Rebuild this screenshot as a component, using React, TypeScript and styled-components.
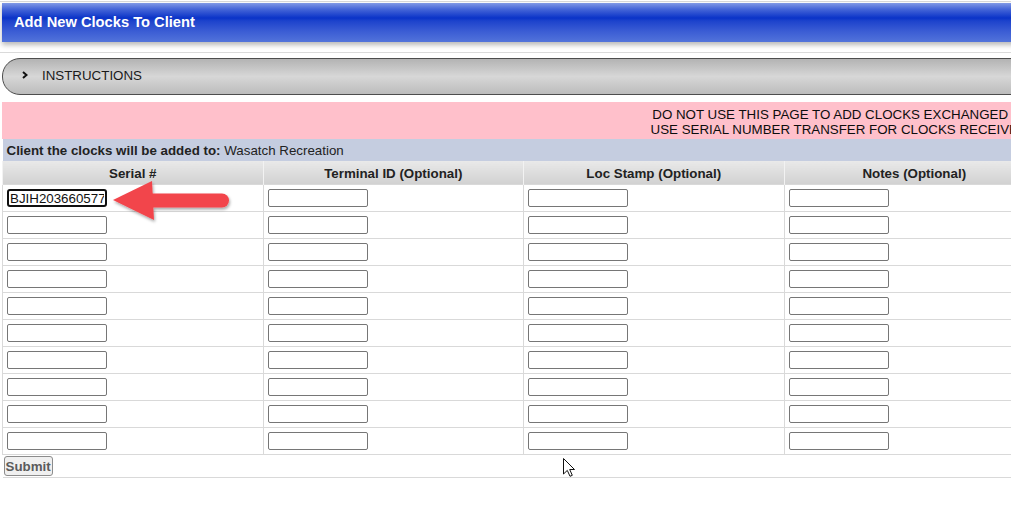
import React from 'react';
import styled, { createGlobalStyle } from 'styled-components';

const GlobalStyle = createGlobalStyle`
  html, body {
    margin: 0;
    padding: 0;
    overflow: hidden;
    background: #fff;
  }
  body {
    font-family: "Liberation Sans", Arial, sans-serif;
    font-size: 13.33px;
    color: #222;
  }
`;

const Page = styled.div`
  position: relative;
  width: 1792px;
  padding-top: 1px;
`;

const Rule = styled.div<{ $gap?: number }>`
  height: 1px;
  background: #dadada;
  margin-top: ${p => p.$gap || 0}px;
`;

const Inner = styled.div`
  padding-left: 2px;
`;

const TitleBar = styled.div`
  margin-top: 1px;
  height: 39px;
  display: flex;
  align-items: center;
  padding: 0 0 1px 12px;
  box-sizing: border-box;
  background: linear-gradient(
    to bottom,
    #8199e6 0px,
    #4767d8 6px,
    #0a33c8 15px,
    #1d43cc 18px,
    #3a5cd4 28px,
    #5273da 39px
  );
  box-shadow: 0 3px 5px rgba(0, 0, 0, 0.28);
  color: #fff;
  font-weight: bold;
  font-size: 14.7px;
`;

const Accordion = styled.div`
  margin-top: 5px;
  height: 37px;
  box-sizing: border-box;
  border: 1px solid #4d4d4d;
  border-radius: 18px;
  background: linear-gradient(to bottom, #b3b3b3 0%, #d7d7d7 50%, #bcbcbc 100%);
  display: flex;
  align-items: center;
  gap: 14px;
  padding: 0 0 3px 19px;
  font-size: 13.33px;
  color: #1a1a1a;
`;

const Banner = styled.div`
  margin-top: 7px;
  background: #ffc0cb;
  padding: 5px 8px 2px 0;
  line-height: 15px;
  text-align: center;
  color: #0d0d0d;
`;

const Grid = styled.table`
  border-collapse: collapse;
  table-layout: fixed;
  width: 1043px;
`;

const InfoCell = styled.td`
  background: #c5cde0;
  height: 21px;
  padding: 1px 4px 0;
  text-align: left;
`;

const HeadCell = styled.th`
  height: 22px;
  padding: 1px 0 0;
  background: linear-gradient(to bottom, #e9e9e9, #d1d1d1);
  border-left: 1px solid #f2f2f2;
  border-right: 1px solid #f2f2f2;
  font-weight: bold;
  text-align: center;
`;

const Cell = styled.td`
  height: 26px;
  padding: 0 4px;
  border: 1px solid #d9d9d9;
  vertical-align: middle;
`;

const SubmitCell = styled.td`
  height: 22px;
  padding: 0 1px;
  border-bottom: 1px solid #d9d9d9;
  vertical-align: middle;
`;

const Field = styled.input<{ $focused?: boolean }>`
  display: block;
  width: 100px;
  height: 18px;
  box-sizing: border-box;
  margin: 0;
  padding: 0 ${p => (p.$focused ? 1 : 2)}px;
  border: ${p => (p.$focused ? '2px solid #101010' : '1px solid #767676')};
  border-radius: ${p => (p.$focused ? 3 : 2)}px;
  background: #fff;
  font-family: "Liberation Sans", Arial, sans-serif;
  font-size: 13.33px;
  color: #111;
  outline: none;
`;

const SubmitButton = styled.button`
  height: 20px;
  padding: 0 1px;
  margin: 0;
  border: 1px solid #8c8c8c;
  border-radius: 3px;
  background: #f0f0f0;
  font-family: "Liberation Sans", Arial, sans-serif;
  font-size: 13.33px;
  font-weight: bold;
  color: #5b5b5b;
`;

const Overlay = styled.svg<{ $x: number; $y: number }>`
  position: absolute;
  left: ${p => p.$x}px;
  top: ${p => p.$y}px;
  overflow: visible;
  pointer-events: none;
`;

const columns = ['Serial #', 'Terminal ID (Optional)', 'Loc Stamp (Optional)', 'Notes (Optional)'];
const rows = Array.from({ length: 10 }, (_, i) => i);

export default function App() {
  return (
    <Page>
      <GlobalStyle />
      <Rule />
      <Inner>
        <TitleBar>Add New Clocks To Client</TitleBar>
      </Inner>
      <Rule $gap={10} />
      <Inner>
        <Accordion>
          <svg width="6" height="8" viewBox="0 0 6 8">
            <polyline points="1,1 4.5,4 1,7" fill="none" stroke="#111" strokeWidth="2" />
          </svg>
          INSTRUCTIONS
        </Accordion>
        <Banner>
          DO NOT USE THIS PAGE TO ADD CLOCKS EXCHANGED THROUGH AN RMA
          <br />
          USE SERIAL NUMBER TRANSFER FOR CLOCKS RECEIVED THROUGH RMA.
        </Banner>
        <Grid>
          <tbody>
            <tr>
              <InfoCell colSpan={4}>
                <b>Client the clocks will be added to:</b> Wasatch Recreation
              </InfoCell>
            </tr>
            <tr>
              {columns.map(c => (
                <HeadCell key={c}>{c}</HeadCell>
              ))}
            </tr>
            {rows.map(r => (
              <tr key={r}>
                {columns.map((c, ci) => (
                  <Cell key={c}>
                    {r === 0 && ci === 0 ? (
                      <Field $focused defaultValue="BJIH203660577" />
                    ) : (
                      <Field />
                    )}
                  </Cell>
                ))}
              </tr>
            ))}
            <tr>
              <SubmitCell colSpan={4}>
                <SubmitButton>Submit</SubmitButton>
              </SubmitCell>
            </tr>
          </tbody>
        </Grid>
      </Inner>

      {/* callout arrow pointing at the serial field */}
      <Overlay $x={108} $y={176} width="126" height="52" viewBox="0 0 126 52">
        <defs>
          <filter id="arrowShadow" x="-20%" y="-30%" width="140%" height="170%">
            <feDropShadow dx="1" dy="2" stdDeviation="1.5" floodColor="#000" floodOpacity="0.35" />
          </filter>
        </defs>
        <g filter="url(#arrowShadow)" fill="#f2454b">
          <rect x="30" y="17.5" width="91" height="14" rx="7" />
          <polygon points="5,24 44,5 46,44" />
        </g>
      </Overlay>

      {/* mouse pointer */}
      <Overlay $x={563} $y={458} width="13" height="19" viewBox="0 0 13 19">
        <path
          d="M0.5 0.5 L0.5 16 L4.3 12.4 L7 18.3 L9.3 17.3 L6.7 11.5 L11.5 11.5 Z"
          fill="#fff"
          stroke="#111"
          strokeWidth="1"
          strokeLinejoin="round"
        />
      </Overlay>
    </Page>
  );
}
